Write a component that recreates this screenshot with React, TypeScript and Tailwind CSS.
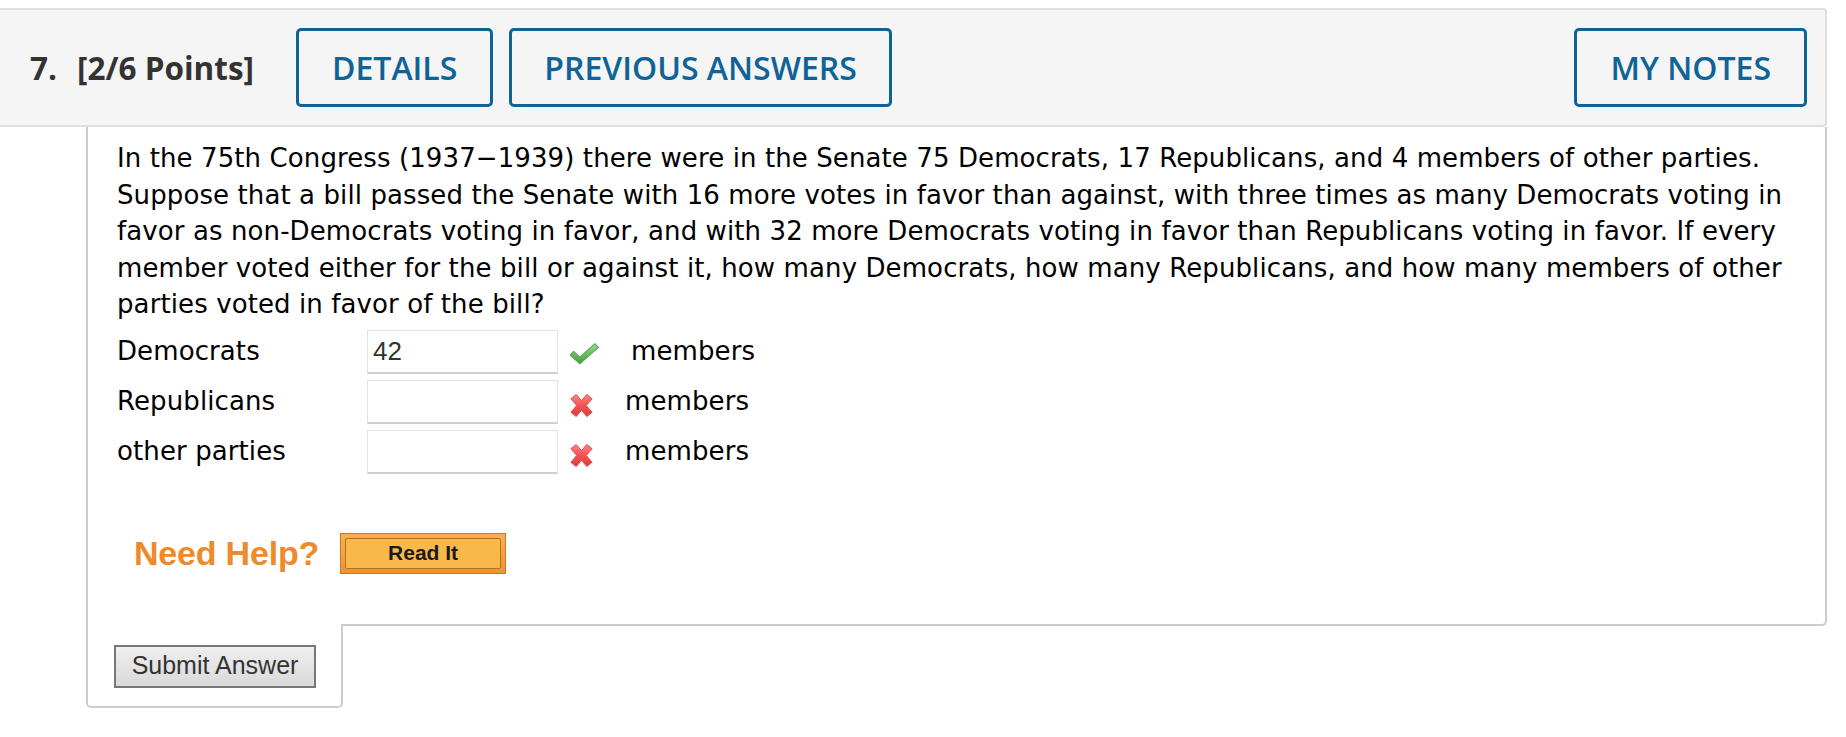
import React from "react";

const body = { fontFamily: '"DejaVu Sans", Verdana, sans-serif' };
const arial = { fontFamily: '"Liberation Sans", Arial, sans-serif' };
const open = { fontFamily: '"Open Sans", "Liberation Sans", sans-serif' };

function CheckIcon() {
  return (
    <svg width="32" height="23" viewBox="0 0 31 22">
      <defs>
        <linearGradient id="chk" x1="0" y1="0" x2="0" y2="1">
          <stop offset="0" stopColor="#9bdc95" />
          <stop offset="0.5" stopColor="#66bf62" />
          <stop offset="1" stopColor="#449a44" />
        </linearGradient>
      </defs>
      <path
        d="M2 12.5 L5.5 9 L11.5 14.5 L26 1.5 L29.5 5 L11.5 21 Z"
        fill="url(#chk)"
        stroke="#56a852"
        strokeWidth="1"
        strokeLinejoin="round"
      />
    </svg>
  );
}

function CrossIcon() {
  return (
    <svg width="27" height="27" viewBox="0 0 28 26">
      <defs>
        <linearGradient id="crs" x1="0" y1="0" x2="0" y2="1">
          <stop offset="0" stopColor="#ff8585" />
          <stop offset="0.5" stopColor="#f25454" />
          <stop offset="1" stopColor="#dc3a3a" />
        </linearGradient>
      </defs>
      <path
        d="M3 6 L8.5 1.5 L14 8 L19.5 1.5 L25 6 L19 13 L25 20 L19.5 24.5 L14 18 L8.5 24.5 L3 20 L9 13 Z"
        fill="url(#crs)"
        stroke="#e44a4a"
        strokeWidth="1"
        strokeLinejoin="round"
      />
    </svg>
  );
}

function HeaderButton({ label, pad = "px-[34px]" }: { label: string; pad?: string }) {
  return (
    <button
      className={`${pad} h-[79px] border-[3px] border-[#0f6396] rounded-[5px] text-[#0f6396] text-[32px] font-semibold`}
      style={open}
    >
      {label}
    </button>
  );
}

function AnswerRow({ label, value, correct }: { label: string; value: string; correct: boolean }) {
  return (
    <div className="flex items-center h-[50px]">
      <div className="w-[250px] text-[26px] tracking-[0.1px] text-black" style={body}>
        {label}
      </div>
      <input
        readOnly
        value={value}
        className="w-[191px] h-[44px] bg-white border border-[#e3e3e3] border-b-2 border-b-[#cfcfcf] px-[5px] text-[26px] text-[#333] outline-none"
        style={arial}
      />
      <div className={correct ? "ml-[10px] mr-[31px] mt-[3px]" : "ml-[10px] mr-[30px] mt-[8px]"}>
        {correct ? <CheckIcon /> : <CrossIcon />}
      </div>
      <div className="text-[26px] tracking-[0.1px] text-black" style={body}>
        members
      </div>
    </div>
  );
}

export default function App() {
  return (
    <div className="w-full min-h-[737px] bg-white pt-[8px]">
      {/* Question header */}
      <div className="w-[1827px] h-[119px] flex items-center bg-[#f5f5f5] border-y-2 border-r-2 border-[#dedede] rounded-r-[4px]">
        <div className="flex items-center pl-[30px] text-[31.5px] font-bold text-[#333]" style={open}>
          <span>7.</span>
          <span className="ml-[20px]">[2/6 Points]</span>
        </div>
        <div className="ml-[42px] flex gap-[16px]">
          <HeaderButton label="DETAILS" pad="px-[33px]" />
          <HeaderButton label="PREVIOUS ANSWERS" pad="px-[32px]" />
        </div>
        <div className="ml-auto mr-[18px]">
          <HeaderButton label="MY NOTES" pad="px-[33px]" />
        </div>
      </div>

      {/* Question body */}
      <div className="ml-[86px] w-[1741px]">
        <div className="border-l-2 border-r-2 border-b-2 border-[#cccccc] rounded-br-[5px] pl-[29px] pr-[30px] pt-[13px] pb-[45px]">
          <p className="text-[26px] tracking-[0.1px] leading-[36.5px] text-black" style={body}>
            In the 75th Congress (1937−1939) there were in the Senate 75 Democrats, 17 Republicans, and 4 members of
            other parties. Suppose that a bill passed the Senate with 16 more votes in favor than against, with three
            times as many Democrats voting in favor as non-Democrats voting in favor, and with 32 more Democrats voting
            in favor than Republicans voting in favor. If every member voted either for the bill or against it, how many
            Democrats, how many Republicans, and how many members of other parties voted in favor of the bill?
          </p>
          <div className="mt-[4px] flex flex-col">
            <AnswerRow label="Democrats" value="42" correct />
            <AnswerRow label="Republicans" value="" correct={false} />
            <AnswerRow label="other parties" value="" correct={false} />
          </div>
          <div className="mt-[51px] ml-[17px] flex items-center">
            <span className="text-[34px] font-bold text-[#ef8a2a] tracking-[-0.2px]" style={arial}>
              Need Help?
            </span>
            <button className="ml-[21px] w-[166px] h-[41px] p-[4px] bg-gradient-to-b from-[#fbb050] to-[#f0942a] border border-[#c07a30]">
              <div
                className="w-full h-full flex items-center justify-center bg-[#fbb84a] border border-[#b0702a] rounded-[2px] text-[21px] font-bold text-[#1a1a1a]"
                style={arial}
              >
                Read It
              </div>
            </button>
          </div>
        </div>
        <div className="relative -mt-[2px] w-[257px] h-[84px] bg-white border-l-2 border-r-2 border-b-2 border-[#cccccc] rounded-b-[5px] pl-[26px] pt-[21px]">
          <button
            className="w-[202px] h-[43px] bg-gradient-to-b from-[#efefef] to-[#d9d9d9] border-2 border-[#777] text-[25px] text-[#333]"
            style={arial}
          >
            Submit Answer
          </button>
        </div>
      </div>
    </div>
  );
}
